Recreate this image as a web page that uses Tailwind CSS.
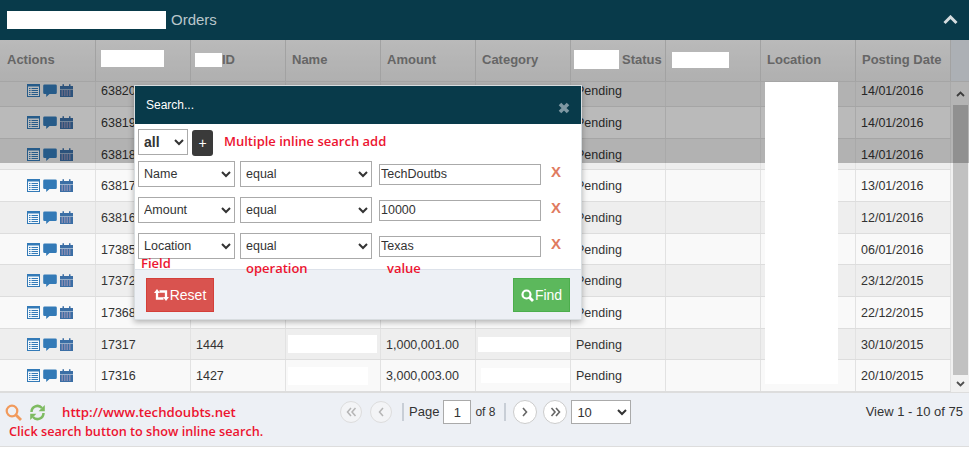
<!DOCTYPE html>
<html lang="en">
<head>
<meta charset="UTF-8">
<title>Orders</title>
<script src="https://cdn.jsdelivr.net/npm/@tailwindcss/browser@4"></script>
</head>
<body class="bg-white font-['Liberation_Sans',Arial,sans-serif] text-[#333]">
<svg class="hidden">
  <symbol id="i-list" viewBox="0 0 13 13"><path fill="#337ab7" d="M0 0h13v13H0z"/><path fill="#f4f8fb" d="M1 2.500h11V12H1z"/><path fill="#337ab7" d="M2 4h1.500v1H2zM4.500 4H11v1H4.500zM2 6h1.500v1H2zM4.500 6H11v1H4.500zM2 8h1.500v1H2zM4.500 8H11v1H4.500zM2 10h1.500v1H2zM4.500 10H11v1H4.500z"/></symbol>
  <symbol id="i-chat" viewBox="0 0 14 13"><path fill="#337ab7" d="M1.500 0.500h11a1.300 1.300 0 0 1 1.300 1.300v7a1.300 1.300 0 0 1-1.300 1.300H6.500L3.200 13V10.100H1.500A1.300 1.300 0 0 1 0.200 8.800v-7A1.300 1.300 0 0 1 1.500 0.500z"/></symbol>
  <symbol id="i-cal" viewBox="0 0 13 13"><path fill="#3b6ea5" d="M0 2h2.500V0.300h1.500V2h5V0.300h1.500V2H13v3H0z"/><path fill="#3b6ea5" d="M0 5.500h13V13H0z"/><path fill="#c9a6bd" d="M1.500 6.500h1.500v1H1.500zM4 6.500h1.500v1H4zM6.500 6.500H8v1H6.500zM9 6.500h1.500v1H9zM1.500 8.500h1.500v1H1.500zM4 8.500h1.500v1H4zM6.500 8.500H8v1H6.500zM9 8.500h1.500v1H9zM1.500 10.500h1.500v1H1.500zM4 10.500h1.500v1H4zM6.500 10.500H8v1H6.500zM9 10.500h1.500v1H9z"/></symbol>
</svg>

<div class="relative w-full h-[452px] overflow-hidden">
  <!-- caption -->
  <div class="h-10 bg-[#083a4a] flex items-center pl-[7px] pr-[11px]">
    <div class="w-[159px] h-[18px] bg-white"></div>
    <span class="ml-[5px] text-[15px] text-[#b9c6cb]">Orders</span>
    <svg class="ml-auto w-[15px] h-[10px]" viewBox="0 0 15 10"><path d="M1.500 8 7.500 2l6 6" fill="none" stroke="#d5dcdf" stroke-width="3"/></svg>
  </div>

  <!-- column headers -->
  <div class="flex h-[42px] border-b border-[#ddd]">
    <div class="w-[951px] shrink-0 grid grid-cols-[96px_repeat(9,95px)] bg-gradient-to-b from-[#f8f8f8] to-[#ebebeb] text-[13px] font-bold text-[#888] *:flex *:items-center *:border-r *:border-[#d8d8d8] *:pl-[6px] *:pb-[2px] *:whitespace-nowrap">
      <div class="pl-[7px]!">Actions</div>
      <div><div class="relative z-20 -ml-[1px] -mt-[3px] w-[63px] h-[17px] bg-white"></div></div>
      <div><div class="relative z-20 -ml-[2px] w-[27px] h-[14px] bg-white"></div>ID</div>
      <div>Name</div>
      <div>Amount</div>
      <div>Category</div>
      <div><div class="relative z-20 -ml-[3px] mr-[3px] w-[45px] h-[19px] bg-white"></div>Status</div>
      <div><div class="relative z-20 w-[57px] h-[16px] bg-white"></div></div>
      <div>Location</div>
      <div>Posting Date</div>
    </div>
    <div class="flex-1 bg-[#e6ebf2]"></div>
  </div>

  <!-- body -->
  <div class="flex h-[310px]">
    <div class="w-[951px] shrink-0 overflow-hidden text-[12.5px]">
      <div class="-mt-[6.5px] *:grid *:grid-cols-[96px_repeat(9,95px)] *:h-[31.67px] *:border-b *:border-[#ddd] *:*:flex *:*:items-center *:*:border-r *:*:border-[#e2e2e2] *:*:pl-[5px] *:*:pt-[2px] *:*:whitespace-nowrap">
        <div class="bg-[#eee]"><div class="justify-center gap-[3px] pt-0!"><svg class="w-[13px] h-[13px]"><use href="#i-list"/></svg><svg class="w-[14px] h-[13px]"><use href="#i-chat"/></svg><svg class="w-[13px] h-[13px]"><use href="#i-cal"/></svg></div><div>63820</div><div></div><div></div><div></div><div></div><div>Pending</div><div></div><div></div><div>14/01/2016</div></div>
        <div class="bg-[#f9f9f9]"><div class="justify-center gap-[3px] pt-0!"><svg class="w-[13px] h-[13px]"><use href="#i-list"/></svg><svg class="w-[14px] h-[13px]"><use href="#i-chat"/></svg><svg class="w-[13px] h-[13px]"><use href="#i-cal"/></svg></div><div>63819</div><div></div><div></div><div></div><div></div><div>Pending</div><div></div><div></div><div>14/01/2016</div></div>
        <div class="bg-[#eee]"><div class="justify-center gap-[3px] pt-0!"><svg class="w-[13px] h-[13px]"><use href="#i-list"/></svg><svg class="w-[14px] h-[13px]"><use href="#i-chat"/></svg><svg class="w-[13px] h-[13px]"><use href="#i-cal"/></svg></div><div>63818</div><div></div><div></div><div></div><div></div><div>Pending</div><div></div><div></div><div>14/01/2016</div></div>
        <div class="bg-[#f9f9f9]"><div class="justify-center gap-[3px] pt-0!"><svg class="w-[13px] h-[13px]"><use href="#i-list"/></svg><svg class="w-[14px] h-[13px]"><use href="#i-chat"/></svg><svg class="w-[13px] h-[13px]"><use href="#i-cal"/></svg></div><div>63817</div><div></div><div></div><div></div><div></div><div>Pending</div><div></div><div></div><div>13/01/2016</div></div>
        <div class="bg-[#eee]"><div class="justify-center gap-[3px] pt-0!"><svg class="w-[13px] h-[13px]"><use href="#i-list"/></svg><svg class="w-[14px] h-[13px]"><use href="#i-chat"/></svg><svg class="w-[13px] h-[13px]"><use href="#i-cal"/></svg></div><div>63816</div><div></div><div></div><div></div><div></div><div>Pending</div><div></div><div></div><div>12/01/2016</div></div>
        <div class="bg-[#f9f9f9]"><div class="justify-center gap-[3px] pt-0!"><svg class="w-[13px] h-[13px]"><use href="#i-list"/></svg><svg class="w-[14px] h-[13px]"><use href="#i-chat"/></svg><svg class="w-[13px] h-[13px]"><use href="#i-cal"/></svg></div><div>17385</div><div></div><div></div><div></div><div></div><div>Pending</div><div></div><div></div><div>06/01/2016</div></div>
        <div class="bg-[#eee]"><div class="justify-center gap-[3px] pt-0!"><svg class="w-[13px] h-[13px]"><use href="#i-list"/></svg><svg class="w-[14px] h-[13px]"><use href="#i-chat"/></svg><svg class="w-[13px] h-[13px]"><use href="#i-cal"/></svg></div><div>17372</div><div></div><div></div><div></div><div></div><div>Pending</div><div></div><div></div><div>23/12/2015</div></div>
        <div class="bg-[#f9f9f9]"><div class="justify-center gap-[3px] pt-0!"><svg class="w-[13px] h-[13px]"><use href="#i-list"/></svg><svg class="w-[14px] h-[13px]"><use href="#i-chat"/></svg><svg class="w-[13px] h-[13px]"><use href="#i-cal"/></svg></div><div>17368</div><div></div><div></div><div></div><div></div><div>Pending</div><div></div><div></div><div>22/12/2015</div></div>
        <div class="bg-[#eee]"><div class="justify-center gap-[3px] pt-0!"><svg class="w-[13px] h-[13px]"><use href="#i-list"/></svg><svg class="w-[14px] h-[13px]"><use href="#i-chat"/></svg><svg class="w-[13px] h-[13px]"><use href="#i-cal"/></svg></div><div>17317</div><div>1444</div><div class="pt-0!"><div class="-ml-[3px] w-[89px] h-[18px] bg-white"></div></div><div>1,000,001.00</div><div class="pt-0!"><div class="-ml-[3px] w-[95px] h-[15px] bg-white"></div></div><div>Pending</div><div></div><div></div><div>30/10/2015</div></div>
        <div class="bg-[#f9f9f9]"><div class="justify-center gap-[3px] pt-0!"><svg class="w-[13px] h-[13px]"><use href="#i-list"/></svg><svg class="w-[14px] h-[13px]"><use href="#i-chat"/></svg><svg class="w-[13px] h-[13px]"><use href="#i-cal"/></svg></div><div>17316</div><div>1427</div><div class="pt-0!"><div class="-ml-[3px] w-[80px] h-[18px] bg-white"></div></div><div>3,000,003.00</div><div class="pt-0!"><div class="w-[93px] h-[15px] bg-white"></div></div><div>Pending</div><div></div><div></div><div>20/10/2015</div></div>
      </div>
    </div>
    <!-- scrollbar -->
    <div class="flex-1 bg-[#f1f1f1] flex flex-col items-center">
      <div class="h-[23px] flex items-center"><svg class="w-[9px] h-[6px]" viewBox="0 0 9 6"><path d="M1 5 4.500 1.500 8 5" fill="none" stroke="#505050" stroke-width="1.800"/></svg></div>
      <div class="w-[15px] h-[270px] bg-[#c1c1c1]"></div>
      <div class="flex-1 flex items-center"><svg class="w-[9px] h-[6px]" viewBox="0 0 9 6"><path d="M1 1 4.500 4.500 8 1" fill="none" stroke="#505050" stroke-width="1.800"/></svg></div>
    </div>
  </div>

  <!-- pager -->
  <div class="h-[55px] bg-[#edf0f5] border-y border-[#ddd] flex text-[13px] pt-[7px]">
    <div class="w-[340px] shrink-0 pl-[5px] font-['Open_Sans',sans-serif] font-semibold text-[#ec1430]">
      <div class="flex items-center h-[24px]">
        <svg class="w-[17px] h-[17px]" viewBox="0 0 17 17"><circle cx="7" cy="7" r="5.300" fill="none" stroke="#f19a5c" stroke-width="2.200"/><path d="M11 11l5 5" stroke="#f19a5c" stroke-width="2.800"/></svg>
        <svg class="ml-[7px] w-[17px] h-[17px]" viewBox="0 0 17 17"><path d="M2.500 8a6 6 0 0 1 10.500-4M14.500 9a6 6 0 0 1-10.500 4" fill="none" stroke="#7ebb61" stroke-width="2.500"/><path d="M15.800 1v6.200H9.600zM1.200 16V9.800h6.200z" fill="#7ebb61"/></svg>
        <span class="ml-[16px] mt-[2px] text-[13.2px]">http://www.techdoubts.net</span>
      </div>
      <div class="pl-[4px] -mt-[2px] leading-[18px] text-[12.7px]">Click search button to show inline search.</div>
    </div>
    <div class="flex items-center h-[24px] text-[#333]">
      <div class="w-[22px] h-[22px] rounded-full border border-[#ddd] bg-[#f3f4f6] flex items-center justify-center"><svg class="w-[11px] h-[10px]" viewBox="0 0 11 10"><path d="M5 1 1.500 5 5 9M9.500 1 6 5l3.500 4" fill="none" stroke="#b5b5b5" stroke-width="1.500"/></svg></div>
      <div class="ml-[8px] w-[22px] h-[22px] rounded-full border border-[#ddd] bg-[#f3f4f6] flex items-center justify-center"><svg class="w-[6px] h-[10px]" viewBox="0 0 6 10"><path d="M5 1 1.500 5 5 9" fill="none" stroke="#b5b5b5" stroke-width="1.500"/></svg></div>
      <div class="ml-[10px] w-[2px] h-[18px] bg-[#c8ced6]"></div>
      <span class="ml-[5px]">Page</span>
      <input class="ml-[4px] w-[28px] h-[24px] bg-white border border-[#aaa] text-center" value="1">
      <span class="ml-[4px] text-[12px]">of 8</span>
      <div class="ml-[9px] w-[2px] h-[18px] bg-[#c8ced6]"></div>
      <div class="ml-[7px] w-[24px] h-[24px] rounded-full border border-[#ccc] bg-white flex items-center justify-center"><svg class="w-[6px] h-[10px]" viewBox="0 0 6 10"><path d="M1 1 4.500 5 1 9" fill="none" stroke="#666" stroke-width="1.600"/></svg></div>
      <div class="ml-[6px] w-[24px] h-[24px] rounded-full border border-[#ccc] bg-white flex items-center justify-center"><svg class="w-[11px] h-[10px]" viewBox="0 0 11 10"><path d="M1.500 1 5 5 1.500 9M6 1l3.500 4L6 9" fill="none" stroke="#666" stroke-width="1.600"/></svg></div>
      <select class="ml-[4px] w-[60px] h-[24px] bg-white border border-[#aaa] pl-[1px]"><option>10</option></select>
    </div>
    <div class="ml-auto pr-[6px] h-[24px] flex items-center">View 1 - 10 of 75</div>
  </div>

  <!-- overlay that only reaches part of the grid -->
  <div class="absolute left-0 right-0 top-10 h-[123px] bg-black/25 z-10"></div>
  <!-- blanked location column -->
  <div class="absolute left-[765px] top-[82px] w-[73px] h-[302px] bg-white z-20"></div>

  <!-- search dialog -->
  <div class="absolute left-[134px] top-[85px] w-[448px] h-[235px] z-30 flex flex-col bg-white border border-[#d8dde0] shadow-[0_2px_6px_rgba(0,0,0,0.3)] text-[13px]">
    <div class="h-[38px] shrink-0 bg-[#083a4a] flex items-center pl-[11px] pr-[11px] text-white text-[12px]">
      <span>Search...</span>
      <svg class="ml-auto mt-[6px] w-[12px] h-[12px]" viewBox="0 0 12 12"><path d="M2 2l8 8M10 2l-8 8" stroke="#7f98a3" stroke-width="3.600"/></svg>
    </div>
    <div class="flex-1 px-[3px] pt-[5px] flex flex-col">
      <div class="flex items-center h-[26px]">
        <select class="w-[50px] h-[26px] border border-[#aaa] pl-[1px] text-[14px] font-semibold"><option>all</option></select>
        <button class="ml-[4px] mt-[2px] w-[21px] h-[26px] rounded-[3px] bg-[#3a3a3a] text-white text-[14px]">+</button>
        <span class="ml-[11px] font-['Open_Sans',sans-serif] font-semibold text-[#ec1430]">Multiple inline search add</span>
      </div>
      <div class="flex items-center h-[26px] mt-[6px] text-[12.5px]">
        <select class="w-[97px] h-[26px] border border-[#aaa] pl-[1px]"><option>Name</option></select>
        <select class="ml-[5px] w-[132px] h-[26px] border border-[#aaa] pl-[1px]"><option>equal</option></select>
        <input class="ml-[7px] w-[162px] h-[21px] border border-[#aaa] pl-[1px]" value="TechDoutbs">
        <span class="ml-[10px] -mt-[4px] text-[15px] font-bold text-[#e07b5f]">X</span>
      </div>
      <div class="flex items-center h-[26px] mt-[10px] text-[12.5px]">
        <select class="w-[97px] h-[26px] border border-[#aaa] pl-[1px]"><option>Amount</option></select>
        <select class="ml-[5px] w-[132px] h-[26px] border border-[#aaa] pl-[1px]"><option>equal</option></select>
        <input class="ml-[7px] w-[162px] h-[21px] border border-[#aaa] pl-[1px]" value="10000">
        <span class="ml-[10px] -mt-[4px] text-[15px] font-bold text-[#e07b5f]">X</span>
      </div>
      <div class="flex items-center h-[26px] mt-[10px] text-[12.5px]">
        <select class="w-[97px] h-[26px] border border-[#aaa] pl-[1px]"><option>Location</option></select>
        <select class="ml-[5px] w-[132px] h-[26px] border border-[#aaa] pl-[1px]"><option>equal</option></select>
        <input class="ml-[7px] w-[162px] h-[21px] border border-[#aaa] pl-[1px]" value="Texas">
        <span class="ml-[10px] -mt-[4px] text-[15px] font-bold text-[#e07b5f]">X</span>
      </div>
    </div>
    <div class="h-[50px] shrink-0 bg-[#edf0f5] border-t border-[#dde2ea] flex items-center justify-between px-[11px] pt-[1px]">
      <button class="w-[68px] h-[34px] bg-[#d9534f] border border-[#d43f3a] text-white text-[14px] flex items-center justify-center gap-[1px]">
        <svg class="w-[15px] h-[12px]" viewBox="0 0 15 12"><path d="M3 3v6.500h6.500M12 9V2.500H5.500" fill="none" stroke="#fff" stroke-width="2.300"/><path d="M0 4l3-4 3 4zM9 8l3 4 3-4z" fill="#fff"/></svg>Reset
      </button>
      <button class="w-[57px] h-[34px] bg-[#5cb85c] border border-[#4cae4c] text-white text-[14px] flex items-center justify-center gap-[1px]">
        <svg class="w-[13px] h-[13px]" viewBox="0 0 13 13"><circle cx="5.500" cy="5.500" r="4" fill="none" stroke="#fff" stroke-width="2.200"/><path d="M8.500 8.500l3.500 3.500" stroke="#fff" stroke-width="2.800"/></svg>Find
      </button>
    </div>
    <!-- hand written notes over the dialog -->
    <span class="absolute left-[6px] top-[169px] font-['Open_Sans',sans-serif] font-semibold text-[#ec1430] leading-[16px]">Field</span>
    <span class="absolute left-[111px] top-[174px] font-['Open_Sans',sans-serif] font-semibold text-[#ec1430] leading-[16px]">operation</span>
    <span class="absolute left-[252px] top-[174px] font-['Open_Sans',sans-serif] font-semibold text-[#ec1430] leading-[16px]">value</span>
  </div>
</div>
</body>
</html>
